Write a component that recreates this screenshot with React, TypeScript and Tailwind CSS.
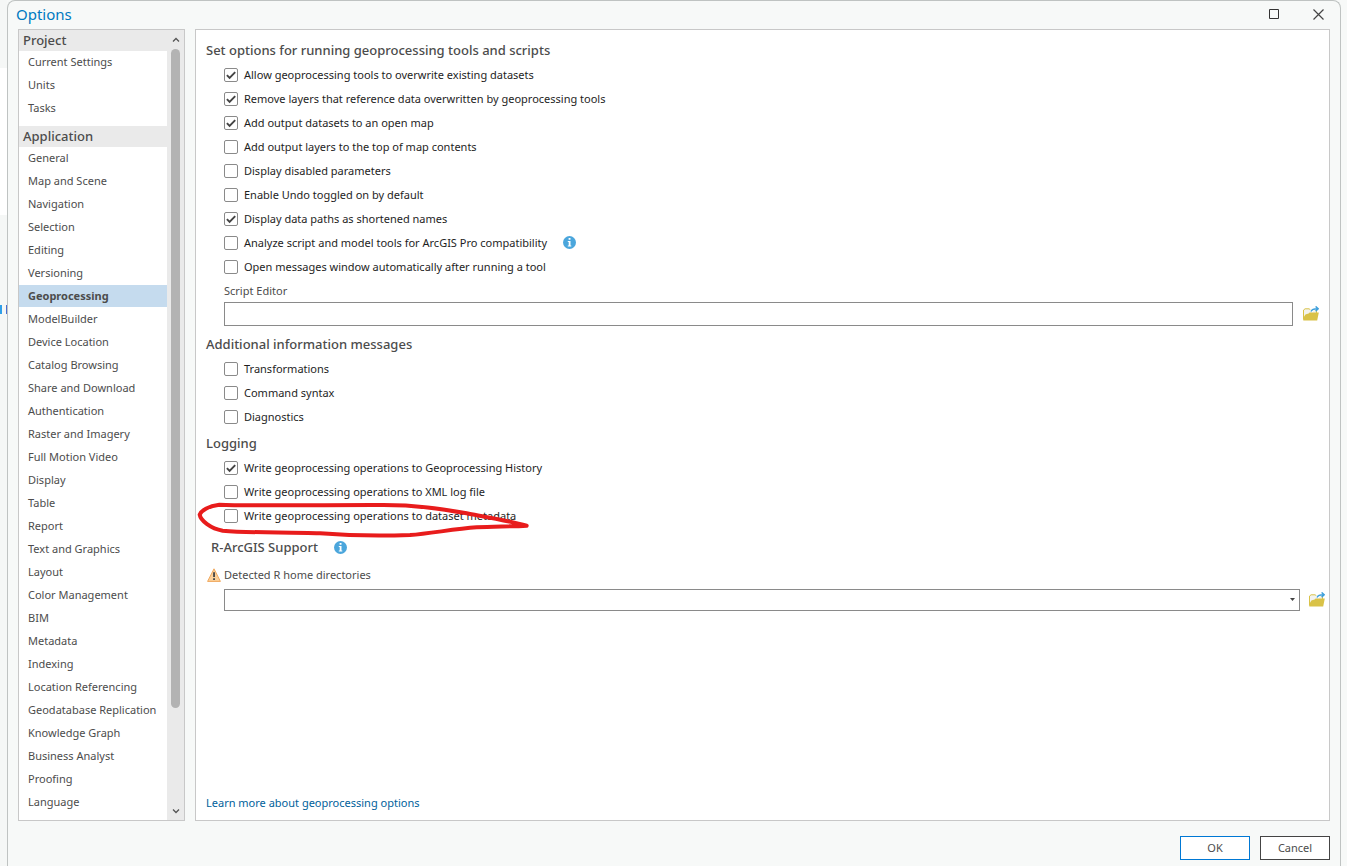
import { useState } from 'react';
import type { ReactNode } from 'react';
import clsx from 'clsx';

const projectPages = ['Current Settings', 'Units', 'Tasks'];

const applicationPages = [
  'General',
  'Map and Scene',
  'Navigation',
  'Selection',
  'Editing',
  'Versioning',
  'Geoprocessing',
  'ModelBuilder',
  'Device Location',
  'Catalog Browsing',
  'Share and Download',
  'Authentication',
  'Raster and Imagery',
  'Full Motion Video',
  'Display',
  'Table',
  'Report',
  'Text and Graphics',
  'Layout',
  'Color Management',
  'BIM',
  'Metadata',
  'Indexing',
  'Location Referencing',
  'Geodatabase Replication',
  'Knowledge Graph',
  'Business Analyst',
  'Proofing',
  'Language',
  'User Interface',
];

interface Option {
  label: string;
  checked?: boolean;
  info?: boolean;
  marked?: boolean;
}

const runOptions: Option[] = [
  { label: 'Allow geoprocessing tools to overwrite existing datasets', checked: true },
  { label: 'Remove layers that reference data overwritten by geoprocessing tools', checked: true },
  { label: 'Add output datasets to an open map', checked: true },
  { label: 'Add output layers to the top of map contents' },
  { label: 'Display disabled parameters' },
  { label: 'Enable Undo toggled on by default' },
  { label: 'Display data paths as shortened names', checked: true },
  { label: 'Analyze script and model tools for ArcGIS Pro compatibility', info: true },
  { label: 'Open messages window automatically after running a tool' },
];

const messageOptions: Option[] = [
  { label: 'Transformations' },
  { label: 'Command syntax' },
  { label: 'Diagnostics' },
];

const loggingOptions: Option[] = [
  { label: 'Write geoprocessing operations to Geoprocessing History', checked: true },
  { label: 'Write geoprocessing operations to XML log file' },
  { label: 'Write geoprocessing operations to dataset metadata', marked: true },
];

function InfoIcon() {
  return (
    <svg className="block h-[13px] w-[13px] shrink-0" viewBox="0 0 13 13" aria-hidden="true">
      <circle cx="6.5" cy="6.5" r="6.5" fill="#4ba6dc" />
      <path d="M5.6 2.1h1.9v1.7H5.6zM4.8 5h2.7v4.4h.8v1.1H4.8V9.4h.9V6.1h-.9z" fill="#fff" />
    </svg>
  );
}

function WarningIcon() {
  return (
    <svg className="h-[14px] w-[14px] shrink-0" viewBox="0 0 14 14" aria-hidden="true">
      <path d="M7 .8 13.4 13.4H.6z" fill="#fbd09a" stroke="#f0a75c" strokeWidth="1" strokeLinejoin="round" />
      <path d="M6.1 4.2h1.9v4.9H6.1zM6.1 10.2h1.9v1.8H6.1z" fill="#4a4a4a" />
    </svg>
  );
}

function FolderIcon() {
  return (
    <svg className="h-4 w-4" viewBox="0 0 16 16" aria-hidden="true">
      <path d="M.5 13.5V4l1.6-1.2h4L7.6 4h5.9v4" fill="#f3f3ee" stroke="#d9c248" strokeWidth="1" />
      <path d="M.3 14.5V12L2.4 8.4 5.6 7.6 6.6 6.4H15.8L14.2 14.5z" fill="#d9c248" />
      <path d="M8 5.6C9 3.2 11 2.6 15 2.8" fill="none" stroke="#fff" strokeWidth="3" />
      <path d="M8 5.6C9 3 11 2.7 15 2.8M12.6.4 15.2 2.8 12.6 5.2" fill="none" stroke="#3fa0dc" strokeWidth="1.4" />
    </svg>
  );
}

function RedMarker() {
  return (
    <svg
      className="pointer-events-none absolute -top-1 -left-[29px] h-10 w-[340px]"
      viewBox="15 180 1020 120"
      aria-hidden="true"
    >
      <path
        d="M1010 257C960 243 900 233 830 220C750 206 680 195 580 195C450 194 200 199 88 194C55 198 33 212 29 224C32 242 62 266 98 272C190 280 300 275 390 280C480 287 580 288 660 285C720 281 790 267 860 262C910 259 960 260 1010 257"
        fill="none"
        stroke="#e81c1c"
        strokeWidth="12"
        strokeLinecap="round"
        strokeLinejoin="round"
      />
    </svg>
  );
}

function CheckRow({ option }: { option: Option }) {
  const [checked, setChecked] = useState(Boolean(option.checked));

  return (
    <div className="relative flex h-6 items-center">
      <label className="flex items-center gap-1.5 text-[#1e1e1e]">
        <span className="relative flex h-3.5 w-3.5">
          <input
            type="checkbox"
            checked={checked}
            onChange={(e) => setChecked(e.target.checked)}
            className="h-3.5 w-3.5 appearance-none rounded-xs border border-[#8a8a8a] bg-white"
          />
          {checked && (
            <svg className="pointer-events-none absolute inset-0 h-3.5 w-3.5" viewBox="0 0 14 14">
              <path d="M2.9 7.2 5.6 10 11.2 4.2" fill="none" stroke="#444" strokeWidth="1.9" />
            </svg>
          )}
        </span>
        {option.label}
      </label>
      {option.info && (
        <span className="ml-4 pb-0.5">
          <InfoIcon />
        </span>
      )}
      {option.marked && <RedMarker />}
    </div>
  );
}

function Section({ title, options }: { title: string; options: Option[] }) {
  return (
    <section>
      <h2 className="h-5 text-[13px] leading-5 font-medium text-[#4c4c4c]">{title}</h2>
      <div className="mt-[3px] pl-[18px]">
        {options.map((option) => (
          <CheckRow key={option.label} option={option} />
        ))}
      </div>
    </section>
  );
}

interface PageGroupProps {
  title: string;
  pages: string[];
  selected: string;
  onSelect: (page: string) => void;
}

function PageGroup({ title, pages, selected, onSelect }: PageGroupProps) {
  return (
    <div className="shrink-0">
      <h2 className="h-[21px] bg-[#eaeaea] pl-1 text-[13px] leading-[21px] font-medium text-[#4c4c4c]">
        {title}
      </h2>
      <ul className="flex flex-col gap-px">
        {pages.map((page) => (
          <li key={page}>
            <button
              type="button"
              onClick={() => onSelect(page)}
              className={clsx(
                'block h-[22px] w-full pl-[9px] text-left whitespace-nowrap text-[#4c4c4c]',
                page === selected && 'bg-[#c5dbee] font-bold'
              )}
            >
              {page}
            </button>
          </li>
        ))}
      </ul>
    </div>
  );
}

function Chevron({ up }: { up?: boolean }) {
  return (
    <svg className="h-2 w-2" viewBox="0 0 8 8" aria-hidden="true">
      <path d={up ? 'M1 5.5 4 2.5 7 5.5' : 'M1 2.5 4 5.5 7 2.5'} fill="none" stroke="#555" strokeWidth="1.3" />
    </svg>
  );
}

function Sidebar() {
  const [selected, setSelected] = useState('Geoprocessing');

  return (
    <nav className="flex w-[167px] shrink-0 border border-[#c8c8c8] bg-white">
      <div className="flex min-w-0 flex-1 flex-col gap-[7px] overflow-y-auto [scrollbar-width:none]">
        <PageGroup title="Project" pages={projectPages} selected={selected} onSelect={setSelected} />
        <PageGroup title="Application" pages={applicationPages} selected={selected} onSelect={setSelected} />
      </div>
      <div className="flex w-[17px] flex-col items-center bg-[#eaeaea]">
        <button type="button" aria-label="Scroll up" className="flex h-[19px] items-center">
          <Chevron up />
        </button>
        <div className="w-[9px] flex-1">
          <div className="h-7/8 rounded-full bg-[#b3b3b3]" />
        </div>
        <button type="button" aria-label="Scroll down" className="flex h-[18px] items-center">
          <Chevron />
        </button>
      </div>
    </nav>
  );
}

function BrowseButton({ label }: { label: string }) {
  return (
    <button type="button" aria-label={label} className="shrink-0">
      <FolderIcon />
    </button>
  );
}

function Panel({ children }: { children: ReactNode }) {
  return (
    <main className="flex min-w-0 flex-1 flex-col overflow-hidden border border-[#c8c8c8] bg-white pt-[10px] pb-[7px] pl-[10px]">
      {children}
    </main>
  );
}

export default function App() {
  return (
    <div className="flex h-screen overflow-hidden bg-[#f7f9f8] font-['Noto_Sans','Open_Sans',sans-serif] text-[11px] leading-5">
      {/* sliver of the window behind the dialog */}
      <div className="w-[7px] shrink-0 overflow-hidden bg-[#f5f7f6] pt-[68px]">
        <div className="h-[147px] bg-white" />
        <div className="mt-[90px] flex h-[9px] justify-between">
          <div className="w-0.5 bg-[#2f9fe8]" />
          <div className="w-px bg-[#4a6fd0]" />
        </div>
      </div>

      <div className="mr-[6px] flex min-w-0 flex-1 flex-col rounded-t-lg border-x border-t border-[#bfc3c2] bg-[#f7f9f8]">
        <header className="flex h-7 shrink-0 items-center pr-4 pb-0.5 pl-2">
          <h1 className="flex-1 text-[15px] text-[#0079c1]">Options</h1>
          <button type="button" aria-label="Maximize" className="mr-[33px]">
            <svg className="h-[11px] w-[11px]" viewBox="0 0 11 11">
              <path d="M.5.5h9v9h-9z" fill="none" stroke="#333" strokeWidth="1" />
            </svg>
          </button>
          <button type="button" aria-label="Close">
            <svg className="h-[11px] w-[11px]" viewBox="0 0 11 11">
              <path d="M.5.5l10 10M10.5.5l-10 10" fill="none" stroke="#444" strokeWidth="1.2" />
            </svg>
          </button>
        </header>

        <div className="flex min-h-0 flex-1 gap-[10px] px-[10px]">
          <Sidebar />
          <Panel>
            <Section title="Set options for running geoprocessing tools and scripts" options={runOptions} />
            <div className="pr-[10px] pl-[18px]">
              <label htmlFor="script-editor" className="block h-[23px] leading-6 text-[#4c4c4c]">
                Script Editor
              </label>
              <div className="flex items-center gap-[10px]">
                <input
                  id="script-editor"
                  type="text"
                  className="h-6 min-w-0 flex-1 border border-[#8a8a8a] bg-white px-1 outline-none"
                />
                <BrowseButton label="Browse for script editor" />
              </div>
            </div>

            <div className="mt-2 flex flex-col gap-1">
              <Section title="Additional information messages" options={messageOptions} />
              <Section title="Logging" options={loggingOptions} />
            </div>

            <div className="mt-[9px] flex h-5 items-center gap-4 pl-[5px]">
              <h2 className="text-[13px] font-medium text-[#4c4c4c]">R-ArcGIS Support</h2>
              <InfoIcon />
            </div>
            <div className="mt-2 flex h-5 items-center gap-[3px] pl-px">
              <WarningIcon />
              <label htmlFor="r-home" className="text-[#4c4c4c]">
                Detected R home directories
              </label>
            </div>
            <div className="mt-1 flex items-center gap-[9px] pr-1 pl-[18px]">
              <div className="relative flex min-w-0 flex-1">
                <select
                  id="r-home"
                  className="h-[22px] w-full appearance-none border border-[#8a8a8a] bg-white outline-none"
                />
                <svg className="pointer-events-none absolute top-[9px] right-[5px] h-[3px] w-[5px]" viewBox="0 0 5 3">
                  <path d="M0 0h5L2.5 3z" fill="#444" />
                </svg>
              </div>
              <BrowseButton label="Browse for R home directory" />
            </div>

            <a href="#" className="mt-auto self-start text-[#00619b]">
              Learn more about geoprocessing options
            </a>
          </Panel>
        </div>

        <footer className="flex h-[45px] shrink-0 items-start justify-end gap-[10px] px-[10px] pt-[15px] text-[#4c4c4c]">
          <button type="button" className="h-6 w-[70px] border border-[#0078d4] bg-white">
            OK
          </button>
          <button type="button" className="h-6 w-[70px] border border-[#444] bg-white">
            Cancel
          </button>
        </footer>
      </div>
    </div>
  );
}
